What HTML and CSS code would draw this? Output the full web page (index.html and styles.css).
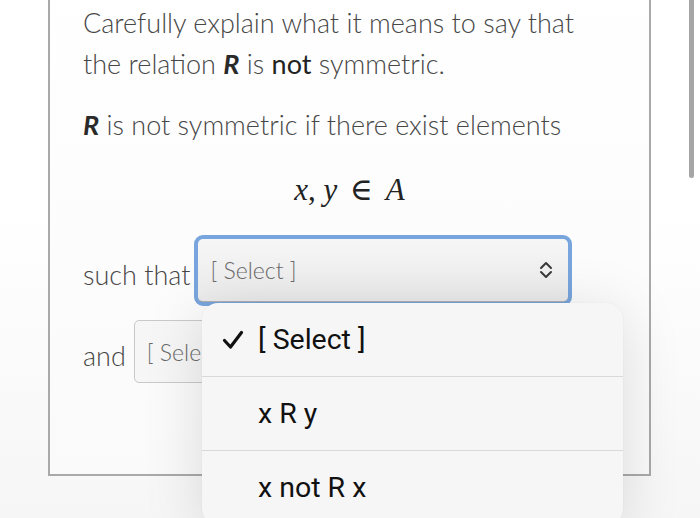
FILE: index.html
```html
<!DOCTYPE html>
<html>
<head>
<meta charset="utf-8">
<link rel="stylesheet" href="styles.css">
</head>
<body>
<div class="page">
  <div class="card">
    <p class="para">Carefully explain what it means to say that the relation <b class="var">R</b> is <b class="strong">not</b> symmetric.</p>
    <p class="para"><b class="var">R</b> is not symmetric if there exist elements</p>
    <div class="math"><i>x</i>, <i>y</i> <span class="in">∈</span> <i>A</i></div>
    <div class="row row-first">
      <span class="label">such that</span>
      <div class="select focused">
        <div class="select-inner">
          <span class="select-text">[ Select ]</span>
          <svg class="chev" width="14" height="18" viewBox="0 0 14 18"><path d="M2 7 L7 2 L12 7 M2 11 L7 16 L12 11" fill="none" stroke="#3a3a3a" stroke-width="2" stroke-linecap="round" stroke-linejoin="round"/></svg>
        </div>
      </div>
    </div>
    <div class="row row-second">
      <span class="label">and</span>
      <div class="select plain">
        <span class="select-text">[ Select ]</span>
      </div>
    </div>
  </div>
  <div class="popup">
    <div class="opt">
      <svg class="check" width="22" height="20" viewBox="0 0 22 20"><path d="M2.5 10.5 L8.5 17 L19.5 2.5" fill="none" stroke="#111" stroke-width="3.2" stroke-linecap="round" stroke-linejoin="round"/></svg>
      <span>[ Select ]</span>
    </div>
    <div class="opt"><span>x R y</span></div>
    <div class="opt"><span>x not R x</span></div>
  </div>
  <div class="scrollbar"></div>
</div>
</body>
</html>
```
FILE: styles.css
```css
html, body {
  margin: 0;
  padding: 0;
  background: #ffffff;
}
.page {
  position: relative;
  width: 700px;
  height: 518px;
  overflow: hidden;
  background: linear-gradient(180deg, #ffffff 0%, #ffffff 40%, #f6f6f6 100%);
}
.card {
  box-sizing: border-box;
  width: 603px;
  margin: -30px 0 0 48px;
  border: 2px solid #a9a9a9;
  background: linear-gradient(180deg, #ffffff 0%, #fafafa 100%);
  padding: 30px 33px 91px 33px;
  font-family: "Lato Light", Lato, "Open Sans", sans-serif;
  font-weight: 300;
  color: #474747;
}
.para {
  margin: 0 0 20px 0;
  font-size: 27px;
  line-height: 41px;
}
.var {
  font-family: Lato, sans-serif;
  font-style: italic;
  font-weight: 700;
  color: #2a2a2a;
}
.strong {
  font-family: Lato, sans-serif;
  font-weight: 400;
  color: #222;
}
.math {
  margin-top: 0;
  text-align: center;
  font-family: "Liberation Serif", "DejaVu Serif", serif;
  font-size: 31px;
  line-height: 50px;
  height: 50px;
  color: #222;
  font-weight: 400;
}
.math i {
  font-style: italic;
}
.in {
  margin: 0 5px;
  font-size: 31px;
}
.row {
  display: flex;
  align-items: center;
}
.row-first {
  margin-top: 20px;
  gap: 3px;
}
.row-second {
  margin-top: 14px;
  gap: 8px;
}
.label {
  font-size: 27px;
  line-height: 30px;
  color: #474747;
  margin-top: 8px;
}
.select {
  box-sizing: border-box;
  width: 378px;
}
.focused {
  height: 71px;
  border: 4px solid #78a5dd;
  border-radius: 9px;
  background: #78a5dd;
}
.select-inner {
  box-sizing: border-box;
  height: 63px;
  border-radius: 5px;
  border-bottom: 1px solid #b0b0b0;
  background: linear-gradient(180deg, #f6f6f6 0%, #ebebeb 100%);
  display: flex;
  align-items: center;
  justify-content: space-between;
  padding: 0 15px 0 13px;
}
.plain {
  height: 63px;
  border: 1px solid #c9c9c9;
  border-radius: 5px;
  background: #f6f6f6;
  display: flex;
  align-items: center;
  padding-left: 12px;
}
.select-text {
  font-size: 23px;
  color: #6a6a6a;
}
.chev {
  display: block;
}
.popup {
  position: absolute;
  left: 202px;
  top: 303px;
  width: 421px;
  height: 222px;
  border-radius: 16px;
  background: #f6f6f6;
  box-shadow: 0 8px 60px rgba(0, 0, 0, 0.13), 0 0 2px rgba(0, 0, 0, 0.06);
  overflow: hidden;
  font-family: Roboto, Inter, "Liberation Sans", sans-serif;
}
.opt {
  height: 73px;
  display: flex;
  align-items: center;
  padding-left: 56px;
  position: relative;
  font-size: 28.5px;
  color: #111;
  border-bottom: 1px solid #d9d9d9;
}
.opt:last-child {
  border-bottom: none;
}
.check {
  position: absolute;
  left: 20px;
  top: 27px;
}
.scrollbar {
  position: absolute;
  left: 689px;
  top: -4px;
  width: 5px;
  height: 182px;
  border-radius: 3px;
  background: #a6a6a6;
}
```
